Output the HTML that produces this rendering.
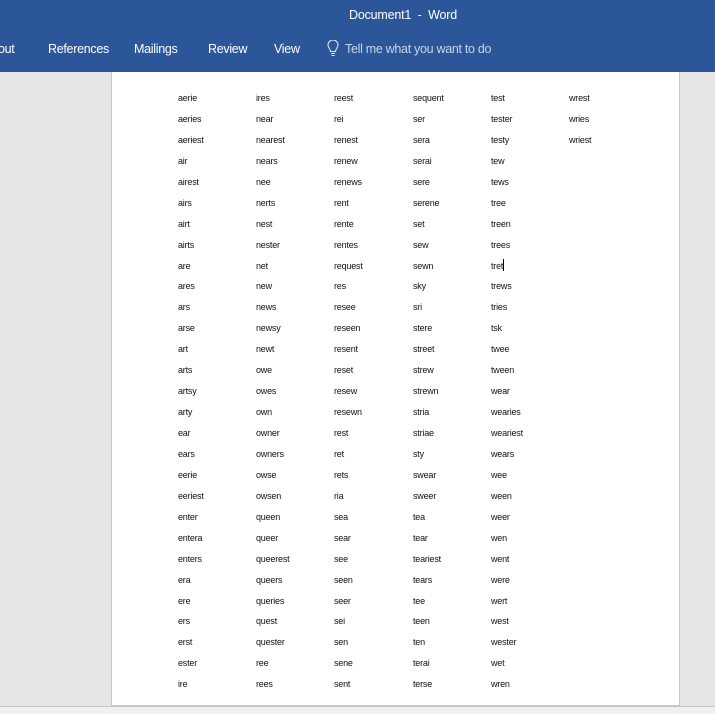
<!DOCTYPE html>
<html><head><meta charset="utf-8"><style>
*{margin:0;padding:0;box-sizing:border-box}
body{width:715px;height:714px;overflow:hidden;background:#e6e6e6;font-family:"Liberation Sans",sans-serif;position:relative}
.top{position:absolute;left:0;top:0;width:715px;height:72px;background:#2b579a;color:#fff}
.title{position:absolute;top:8px;left:349px;font-size:12.5px;letter-spacing:-0.2px}
.tab{position:absolute;top:42px;font-size:12.5px;letter-spacing:-0.3px}
.page{position:absolute;left:111px;top:72px;width:569px;height:634px;background:#fff;border-left:1px solid #c6c6c6;border-right:1px solid #c6c6c6;border-bottom:1px solid #c6c6c6}
.status{position:absolute;left:0;top:706px;width:715px;height:8px;background:#f0f0f0;border-top:1px solid #c6c6c6}
.col{position:absolute;top:88px;font-size:9px;color:#111;line-height:20.93px;letter-spacing:-0.2px}
</style></head><body>
<div class="top">
<div class="title">Document1 &nbsp;-&nbsp; Word</div>
<div class="tab" style="left:-2px">out</div>
<div class="tab" style="left:48px">References</div>
<div class="tab" style="left:134px">Mailings</div>
<div class="tab" style="left:208px">Review</div>
<div class="tab" style="left:274px">View</div>
<svg style="position:absolute;left:327px;top:40px" width="12" height="17" viewBox="0 0 12 17"><path d="M3.5 11.5 C3.5 9 1 7.5 1 5 A5 5 0 0 1 11 5 C11 7.5 8.5 9 8.5 11.5 Z M4 13.5 H8 M4.5 15.5 H7.5" fill="none" stroke="#dfe6f0" stroke-width="1.1"/></svg>
<div class="tab" style="left:345px;color:#c9d4e6">Tell me what you want to do</div>
</div>
<div class="page"></div>
<div class="col" style="left:178px">aerie<br>aeries<br>aeriest<br>air<br>airest<br>airs<br>airt<br>airts<br>are<br>ares<br>ars<br>arse<br>art<br>arts<br>artsy<br>arty<br>ear<br>ears<br>eerie<br>eeriest<br>enter<br>entera<br>enters<br>era<br>ere<br>ers<br>erst<br>ester<br>ire</div>
<div class="col" style="left:256px">ires<br>near<br>nearest<br>nears<br>nee<br>nerts<br>nest<br>nester<br>net<br>new<br>news<br>newsy<br>newt<br>owe<br>owes<br>own<br>owner<br>owners<br>owse<br>owsen<br>queen<br>queer<br>queerest<br>queers<br>queries<br>quest<br>quester<br>ree<br>rees</div>
<div class="col" style="left:334px">reest<br>rei<br>renest<br>renew<br>renews<br>rent<br>rente<br>rentes<br>request<br>res<br>resee<br>reseen<br>resent<br>reset<br>resew<br>resewn<br>rest<br>ret<br>rets<br>ria<br>sea<br>sear<br>see<br>seen<br>seer<br>sei<br>sen<br>sene<br>sent</div>
<div class="col" style="left:413px">sequent<br>ser<br>sera<br>serai<br>sere<br>serene<br>set<br>sew<br>sewn<br>sky<br>sri<br>stere<br>street<br>strew<br>strewn<br>stria<br>striae<br>sty<br>swear<br>sweer<br>tea<br>tear<br>teariest<br>tears<br>tee<br>teen<br>ten<br>terai<br>terse</div>
<div class="col" style="left:491px">test<br>tester<br>testy<br>tew<br>tews<br>tree<br>treen<br>trees<br>tret<span style="display:inline-block;width:1px;height:12px;background:#000;vertical-align:-2px"></span><br>trews<br>tries<br>tsk<br>twee<br>tween<br>wear<br>wearies<br>weariest<br>wears<br>wee<br>ween<br>weer<br>wen<br>went<br>were<br>wert<br>west<br>wester<br>wet<br>wren</div>
<div class="col" style="left:569px">wrest<br>wries<br>wriest</div>
<div class="status"></div>
</body></html>
